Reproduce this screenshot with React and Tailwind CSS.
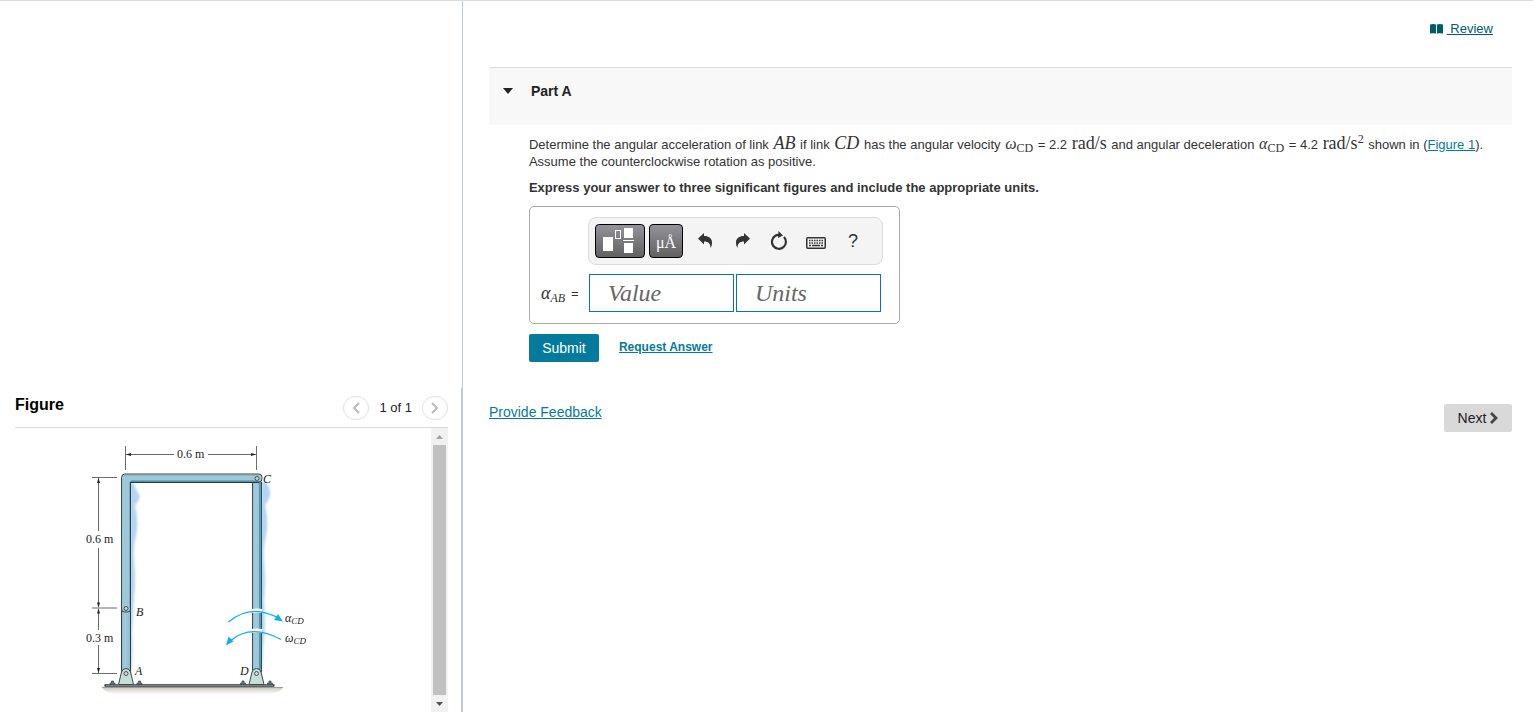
const iconButton = 'flex h-8 w-8 items-center justify-center text-[#333333]';
const mathText = 'mx-px font-["Liberation_Serif",serif] leading-none';

function SupportPin({ cx }) {
  return (
    <g transform={`translate(${cx} 0)`}>
      <g fill="#4f8298" stroke="#33454d" strokeWidth="0.7">
        <path d="M-16 684.5v-1.5h1.5v-2h2v2h1.5v1.5z" />
        <path d="M11 684.5v-1.5h1.5v-2h2v2h1.5v1.5z" />
      </g>
      <path
        d="M-7.5 684.5 L-4.5 672 Q-3.5 668.5 0 668.5 Q3.5 668.5 4.5 672 L7.5 684.5Z"
        fill="#c4dfd8"
        stroke="#40484a"
        strokeWidth="1"
      />
      <circle cy="673.5" r="2" fill="#d5dada" stroke="#444" strokeWidth="0.9" />
    </g>
  );
}

function LinkageFigure() {
  return (
    <svg
      viewBox="15 428 300 284"
      className='h-[284px] w-[300px] shrink-0 font-["Liberation_Serif",serif]'
      role="img"
      aria-label="Linkage ABCD"
    >
      <defs>
        <linearGradient id="ground" x1="0" y1="0" x2="0" y2="1">
          <stop offset="0" stopColor="#c9c4b8" />
          <stop offset="1" stopColor="#ffffff" />
        </linearGradient>
        <linearGradient id="bar" x1="0" y1="0" x2="1" y2="0">
          <stop offset="0" stopColor="#8fbfd2" />
          <stop offset="0.4" stopColor="#a3cbdc" />
          <stop offset="1" stopColor="#8bbcd0" />
        </linearGradient>
        <filter id="soft" x="-50%" y="-5%" width="200%" height="110%">
          <feGaussianBlur stdDeviation="0.8" />
        </filter>
      </defs>

      {/* shadows beside the posts */}
      <g fill="#b5d4f1" filter="url(#soft)">
        <path d="M130 482h3q3 8 7 14q-2 7-5 9q4 18 1 31q-3 10-2 24q2 24 0 36q-1 20-2 36q1 22-1 40h-3z" />
        <path d="M261 482h5q5 7 4 14q-2 6-5 9q4 18 1 31q-3 10-2 24q2 24 0 40q2 30-1 48q0 14-2 22h-3z" />
      </g>

      <path d="M102 687h181q-2 8-26 7h-132q-20 1-23-7z" fill="url(#ground)" />

      {/* frame */}
      <path d="M121.5 610V600h9v72h-9z" fill="url(#bar)" />
      <path d="M121.5 600v74M130.5 600v74" stroke="#333c42" />
      <rect x="252.5" y="480" width="9" height="194" fill="url(#bar)" />
      <path d="M260 482v192" stroke="#4f9bad" strokeWidth="2" />
      <path d="M252.5 482v190M261.5 482v190" stroke="#3a4c55" strokeWidth="1" />
      <path
        d="M121.5 609V477.5q0-3.500 3.500-3.500H259q3 0 3 3.500v1q0 3.500-3 3.500H130.5V609q0 3-3 3h-3q-3 0-3-3z"
        fill="#9cc8da"
        stroke="#3b444b"
      />
      <path d="M131 481h127" stroke="#3d93aa" strokeWidth="1" />
      <path d="M129.5 482v126" stroke="#7dacc0" strokeWidth="1" />
      <path d="M124 475h134" stroke="#8f9da2" strokeWidth="1" />
      <path d="M130.5 482.5v126M130 482.5h129" stroke="#263b43" />
      <g fill="#cfd5d6" stroke="#444" strokeWidth="0.9">
        <circle cx="257" cy="478.5" r="2" />
        <circle cx="126" cy="608.5" r="2" />
      </g>

      {/* rotation arrows */}
      <path d="M252 611q5-1 10 0M252 631q5-1 10 0" stroke="#fff" strokeWidth="4" />
      <g fill="none" stroke="#12aeea" strokeWidth="1.4">
        <path d="M228.5 622Q251 603 278 618" />
        <path d="M230 641Q251 623 281 639.5" />
      </g>
      <path d="M283 621.5l-9-1.500 4-6z" fill="#12aeea" />
      <path d="M226 645.5l2.500-9 5 5z" fill="#12aeea" />

      <path d="M104.5 685.5h170" stroke="#2b3034" strokeWidth="2.4" />
      <path d="M106 685.5h167" stroke="#9aa5aa" strokeWidth="0.7" />
      <path d="M102 687.5h181" stroke="#77736a" strokeWidth="0.5" />
      <SupportPin cx={126} />
      <SupportPin cx={256.5} />

      {/* dimension lines */}
      <g stroke="#5a5a5a" strokeWidth="0.9">
        <path d="M125.5 446v24M256.5 446v24M126 454.5h48M208 454.5h48" />
        <path d="M92 477.5h25M92 608h25M92 673.5h25" />
        <path d="M98.5 478v53M98.5 548v59M98.5 609v21M98.5 645v28" />
      </g>
      <g fill="#222">
        <path d="M126 454.5l5-1.500v3zM256 454.5l-5-1.500v3z" />
        <path d="M98.5 478l-1.500 5h3zM98.5 607.5l-1.500-5h3zM98.5 608.5l-1.500 5h3zM98.5 673l-1.500-5h3z" />
      </g>

      <g fill="#222" fontSize="12">
        <text x="177" y="458">0.6 m</text>
        <text x="86" y="543">0.6 m</text>
        <text x="86" y="642">0.3 m</text>
        <g fontStyle="italic">
          <text x="263" y="483">C</text>
          <text x="136" y="616">B</text>
          <text x="135" y="675">A</text>
          <text x="240" y="675">D</text>
          <text x="285" y="622">α<tspan fontSize="9" dy="2">CD</tspan></text>
          <text x="285" y="642">ω<tspan fontSize="9" dy="2">CD</tspan></text>
        </g>
      </g>
    </svg>
  );
}

function PagerButton({ label, points }) {
  return (
    <button
      type="button"
      aria-label={label}
      className="flex h-6 w-[26px] items-center justify-center rounded-full border border-[#e0e0e0] bg-white"
    >
      <svg viewBox="0 0 8 12" className="h-3 w-2" fill="none" stroke="#b9b9b9" strokeWidth="2">
        <polyline points={points} />
      </svg>
    </button>
  );
}

function FigurePanel() {
  return (
    <aside className="flex w-[30.2%] shrink-0 flex-col">
      <div className="h-[387px] border-r border-[#b9cbdd]" />
      <section className="flex flex-1 flex-col border-r-2 border-[#b9cbdd] pl-[15px] pr-[13px]">
        <div className="flex h-10 items-center justify-between border-b border-[#d9d9d9]">
          <h2 className="pb-1.5 text-base font-bold text-black">Figure</h2>
          <div className="flex items-center gap-2.5">
            <PagerButton label="Previous figure" points="7,1 2,6 7,11" />
            <span className="text-[13px] text-[#222222]">1 of 1</span>
            <PagerButton label="Next figure" points="1,1 6,6 1,11" />
          </div>
        </div>
        <div className="flex flex-1 justify-between">
          <LinkageFigure />
          <div className="flex w-[17px] flex-col items-center bg-[#f1f1f1]">
            <svg viewBox="0 0 17 17" className="h-[17px] w-[17px] shrink-0">
              <path d="M5 11h7L8.500 7z" fill="#a3a3a3" />
            </svg>
            <div className="w-[13px] flex-1 bg-[#c1c1c1]" />
            <svg viewBox="0 0 17 17" className="h-[17px] w-[17px] shrink-0">
              <path d="M5 7h7l-3.500 4z" fill="#505050" />
            </svg>
          </div>
        </div>
      </section>
    </aside>
  );
}

function Toolbar() {
  return (
    <div className="flex h-12 w-[295px] items-center rounded-lg border border-[#dcdcdc] bg-[#f4f4f4] px-1.5">
      <button
        type="button"
        aria-label="Templates"
        className="mr-1 h-[34px] w-[50px] rounded border border-black bg-linear-to-b from-[#94939b] to-[#626262]"
      >
        <svg viewBox="0 0 48 32" className="h-8 w-12" fill="#fff">
          <rect x="7" y="12" width="10" height="14" />
          <rect x="19.5" y="5.5" width="5" height="8" fill="none" stroke="#fff" />
          <rect x="28" y="3" width="9" height="10" />
          <rect x="27" y="15" width="11" height="1" />
          <rect x="28" y="18" width="9" height="10" />
        </svg>
      </button>
      <button
        type="button"
        aria-label="Units"
        className='mr-1.5 h-[34px] w-[34px] rounded border border-black bg-linear-to-b from-[#94939b] to-[#626262] pt-1 font-["Liberation_Serif",serif] text-base text-white'
      >
        μÅ
      </button>
      <button type="button" aria-label="Undo" className={iconButton}>
        <svg viewBox="0 0 14 16" className="h-4 w-3.5" fill="currentColor">
          <path d="M0 5.500 6 0v3c5 0 8 2.500 8 6.500 0 2-.5 4-1.500 5.500C12.500 10.500 10.500 8.500 6 8.500V11.500z" />
        </svg>
      </button>
      <button type="button" aria-label="Redo" className={`ml-1.5 ${iconButton}`}>
        <svg viewBox="0 0 14 16" className="h-4 w-3.5" fill="currentColor">
          <path d="M14 5.500 8 0v3C3 3 0 5.500 0 9.500c0 2 .5 4 1.500 5.500C1.500 10.500 3.500 8.500 8 8.500V11.500z" />
        </svg>
      </button>
      <button type="button" aria-label="Reset" className={`ml-1 ${iconButton}`}>
        <svg viewBox="0 0 18 20" className="h-5 w-[18px]" fill="none">
          <path d="M14 6A7 7 0 1 1 5 5Q7 3.500 10 4" stroke="currentColor" strokeWidth="2.2" />
          <path d="M8.500 0l4.500 4.500L8 7z" fill="currentColor" />
        </svg>
      </button>
      <button type="button" aria-label="Keyboard" className={`ml-[5px] ${iconButton}`}>
        <svg viewBox="0 0 20 12" className="mt-1 h-3 w-5" fill="none" stroke="currentColor">
          <rect x="0.75" y="0.75" width="18.5" height="10.5" rx="1" strokeWidth="1.5" />
          <path d="M3 3.500h14M3 6h14" strokeWidth="1.5" strokeDasharray="1.5 1" />
          <path d="M3 8.500h2M6 8.500h8M15 8.500h2" strokeWidth="1.5" />
        </svg>
      </button>
      <button type="button" aria-label="Help" className={`ml-[5px] text-lg ${iconButton}`}>
        ?
      </button>
    </div>
  );
}

function AnswerForm() {
  const field =
    'h-[38px] w-[145px] border border-[#047a9c] bg-white px-[18px] font-["Liberation_Serif",serif] text-2xl italic text-[#333333] placeholder:text-[#666666]';

  return (
    <form onSubmit={(e) => e.preventDefault()}>
      <div className="mt-2.5 flex h-[118px] w-[371px] flex-col rounded-[5px] border border-[#a8a8a8] pl-[11px] pt-2.5">
        <div className="pl-[47px]">
          <Toolbar />
        </div>
        <div className="mt-[9px] flex items-center">
          <label htmlFor="value" className="flex w-12 items-center gap-1.5 whitespace-nowrap">
            <i className="font-['Liberation_Serif',serif] text-lg leading-none">
              α<sub className="text-xs">AB</sub>
            </i>
            <span className="text-[13px]">=</span>
          </label>
          <input id="value" placeholder="Value" className={field} />
          <input aria-label="Units" placeholder="Units" className={`ml-0.5 ${field}`} />
        </div>
      </div>
      <div className="mt-2.5 flex items-center gap-5">
        <button type="submit" className="h-7 w-[70px] rounded-xs bg-[#047a9c] text-sm text-white">
          Submit
        </button>
        <a href="#answer" className="pb-0.5 text-xs font-bold text-[#047a9c] underline">
          Request Answer
        </a>
      </div>
    </form>
  );
}

function Question() {
  return (
    <div className="pl-10 pt-[9px] text-[13px] leading-[17px] text-[#333333]">
      <p>
        Determine the angular acceleration of link <i className={`text-lg ${mathText}`}>AB</i> if
        link <i className={`text-lg ${mathText}`}>CD</i> has the angular velocity{' '}
        <span className={`text-base ${mathText}`}>
          <i>ω</i>
          <sub className="text-xs">CD</sub>
        </span>{' '}
        = 2.2 <span className={`text-lg ${mathText}`}>rad/s</span> and angular deceleration{' '}
        <span className={`text-base ${mathText}`}>
          <i>α</i>
          <sub className="text-xs">CD</sub>
        </span>{' '}
        = 4.2{' '}
        <span className={`text-lg ${mathText}`}>
          rad/s<sup className="text-xs">2</sup>
        </span>{' '}
        shown in (
        <a href="#figure" className="text-[#047a9c] underline">
          Figure 1
        </a>
        ).
        <br />
        Assume the counterclockwise rotation as positive.
      </p>
      <p className="mt-[9px] font-bold">
        Express your answer to three significant figures and include the appropriate units.
      </p>
      <AnswerForm />
    </div>
  );
}

export default function App() {
  return (
    <div className='flex min-h-screen border-t border-[#dcdcdc] bg-white font-["Liberation_Sans",Arial,sans-serif]'>
      <FigurePanel />
      <main className="flex-1 pl-[26px] pr-[21px]">
        <div className="flex h-[66px] items-start justify-end pr-[19px] pt-[18px]">
          <a href="#review" className="flex items-center gap-1 text-[13px] text-[#005a70]">
            <svg viewBox="0 0 13 10" className="h-2.5 w-[13px]" fill="currentColor">
              <path d="M0 .5Q3.500-.5 6 .5V9.500Q3.500 8.800 0 9.500zM7 .5Q9.500-.5 13 .5V9.500Q9.500 8.800 7 9.500z" />
            </svg>
            <span className="whitespace-pre underline"> Review</span>
          </a>
        </div>
        <button
          type="button"
          aria-expanded="true"
          className="flex h-[58px] w-full items-start border-t border-[#dcdcdc] bg-[#f8f8f8] pl-3.5 pt-3.5 text-left"
        >
          <svg viewBox="0 0 10 6" className="mr-[18px] mt-1.5 h-1.5 w-2.5">
            <path d="M0 0h10L5 6z" fill="#222" />
          </svg>
          <span className="text-sm font-bold leading-[18px] text-[#222222]">Part A</span>
        </button>
        <Question />
        <div className="mt-[42px] flex items-start justify-between">
          <a href="#feedback" className="text-sm leading-4 text-[#047a9c] underline">
            Provide Feedback
          </a>
          <button
            type="button"
            className="flex h-7 w-[68px] items-center justify-center gap-1 rounded-xs bg-[#d9d9d9] text-sm text-[#222222]"
          >
            Next
            <svg viewBox="0 0 8 12" className="h-3 w-2" fill="none" stroke="#444" strokeWidth="2.8">
              <polyline points="1,1 6,6 1,11" />
            </svg>
          </button>
        </div>
      </main>
    </div>
  );
}
